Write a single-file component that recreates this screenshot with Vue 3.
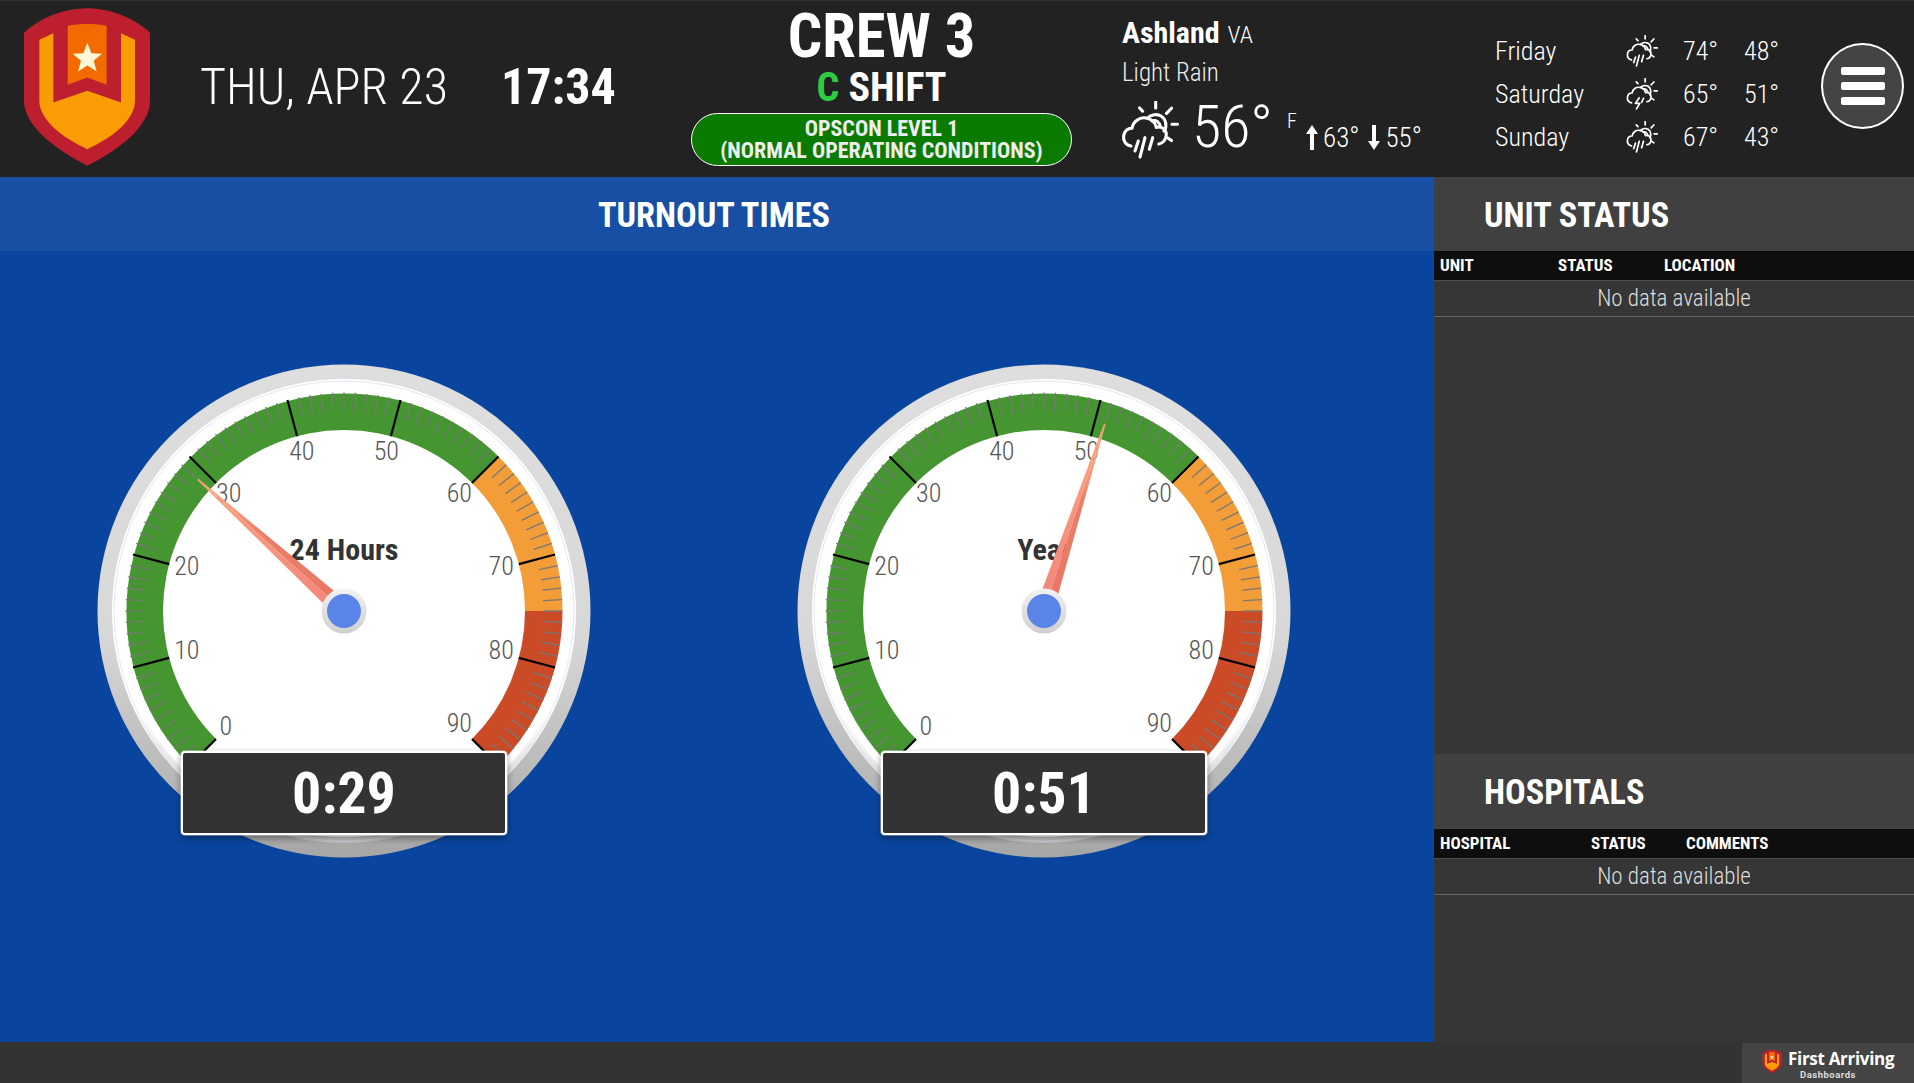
<script setup>
const deg = (v) => (v - 45) * 3
const polar = (r, a) => {
  const t = (a * Math.PI) / 180
  return { x: +(r * Math.sin(t)).toFixed(2), y: +(-r * Math.cos(t)).toFixed(2) }
}
const arc = (from, to, ro, ri) => {
  const a = polar(ro, deg(from)), b = polar(ro, deg(to)), c = polar(ri, deg(to)), d = polar(ri, deg(from))
  const large = deg(to) - deg(from) > 180 ? 1 : 0
  return `M${a.x} ${a.y}A${ro} ${ro} 0 ${large} 1 ${b.x} ${b.y}L${c.x} ${c.y}A${ri} ${ri} 0 ${large} 0 ${d.x} ${d.y}Z`
}
const bands = [
  { d: arc(0, 60, 218.5, 181), c: '#459630' },
  { d: arc(60, 75, 218.5, 181), c: '#f39d38' },
  { d: arc(75, 90, 218.5, 181), c: '#cb4b27' }
]
const minor = []
const major = []
for (let v = 0; v <= 90; v++) {
  if (v % 10 === 0) {
    major.push({ a: polar(218.5, deg(v)), b: polar(181, deg(v)) })
  } else {
    minor.push({ a: polar(218.5, deg(v)), b: polar(199.5, deg(v)) })
  }
}
const labels = [
  { v: 0, x: -118.3, y: 115.7 },
  { v: 10, x: -157.2, y: 39 },
  { v: 20, x: -157.2, y: -45 },
  { v: 30, x: -115.3, y: -117.7 },
  { v: 40, x: -42.2, y: -160 },
  { v: 50, x: 42.3, y: -160 },
  { v: 60, x: 115.3, y: -117.7 },
  { v: 70, x: 157.2, y: -45 },
  { v: 80, x: 157.2, y: 39 },
  { v: 90, x: 115.3, y: 112.3 }
]
const gauges = [
  { title: '24 Hours', val: 29, text: '0:29' },
  { title: 'Year', val: 51, text: '0:51' }
]
const forecast = [
  { day: 'Friday', icon: '#wx-rain', hi: '74°', lo: '48°' },
  { day: 'Saturday', icon: '#wx-bolt', hi: '65°', lo: '51°' },
  { day: 'Sunday', icon: '#wx-rain', hi: '67°', lo: '43°' }
]
</script>

<template>
  <div class="page">
    <svg class="defs" width="0" height="0" aria-hidden="true">
      <defs>
        <linearGradient id="rim" x1="0" y1="0" x2="0" y2="1">
          <stop offset="0" stop-color="#dedede" />
          <stop offset="0.55" stop-color="#d8d8d8" />
          <stop offset="1" stop-color="#a6a6a6" />
        </linearGradient>
        <linearGradient id="rim2" x1="0" y1="0" x2="0" y2="1">
          <stop offset="0" stop-color="#ffffff" />
          <stop offset="0.72" stop-color="#ffffff" />
          <stop offset="1" stop-color="#c4c4c4" />
        </linearGradient>
        <linearGradient id="hub" x1="0" y1="0" x2="0" y2="1">
          <stop offset="0" stop-color="#f2f2f2" />
          <stop offset="1" stop-color="#cfcfcf" />
        </linearGradient>
        <linearGradient id="nl" gradientUnits="userSpaceOnUse" x1="0" y1="-20" x2="0" y2="-197">
          <stop offset="0" stop-color="#f5877d" />
          <stop offset="1" stop-color="#fba57f" />
        </linearGradient>
        <linearGradient id="nr" gradientUnits="userSpaceOnUse" x1="0" y1="-20" x2="0" y2="-197">
          <stop offset="0" stop-color="#e87865" />
          <stop offset="0.55" stop-color="#ea7e69" />
          <stop offset="0.72" stop-color="#f99a7c" />
          <stop offset="1" stop-color="#fba57f" />
        </linearGradient>
        <symbol id="wx-base" viewBox="0 0 58 58">
          <g fill="none" stroke="#fff" stroke-width="3.1" stroke-linecap="round" stroke-linejoin="round">
            <path d="M34.7 1.2V7M45.5 12.4L50.5 7.2M51 23.3H56.5M46.8 37L50.5 39.6M18.6 7L21.6 10.2" />
            <path d="M26.5 17C30 13.4 36 12.6 40 15C45 18 46.5 25.5 43 30M31 20C35 18.5 38.5 21 39.5 26" />
            <path d="M10 45C5 44.5 2 40 2.6 35C3.2 30 7 27 11 27.2C12 20.5 18.5 15.8 25 17C30.5 18 34.5 21.8 35.3 26.5C40.5 24.8 45.3 28.3 45.3 33.5C45.3 38.5 42 42.4 37.8 43" />
          </g>
        </symbol>
        <symbol id="wx-rain" viewBox="0 0 58 58">
          <use href="#wx-base" width="58" height="58" />
          <path d="M24 36.7L19 56M17.3 40L14 50M31.7 36.7L28.3 48.3" fill="none" stroke="#fff" stroke-width="3.1" stroke-linecap="round" />
        </symbol>
        <symbol id="wx-bolt" viewBox="0 0 58 58">
          <use href="#wx-base" width="58" height="58" />
          <path d="M24 36L17 46H25L19 56M31.7 36.7L28.3 44" fill="none" stroke="#fff" stroke-width="3.1" stroke-linecap="round" stroke-linejoin="round" />
        </symbol>
        <symbol id="shield" viewBox="60 10 402 497">
          <path d="M261 22C330 22 400 50 450 95V300C450 380 350 450 262 495C175 450 72 380 72 300V95C122 50 190 22 261 22Z" fill="#bd1f2e" />
          <path d="M118 117L160 97V305L262 270L363 305V97L405 117V300C405 360 330 415 262 445C195 415 118 360 118 300Z" fill="#f99c05" />
          <path d="M203 75C240 68 285 68 320 75V252L262 230L203 252Z" fill="#f26b00" />
          <path d="M262 126L274 157L306 159L281 180L290 212L262 194L234 212L243 180L218 159L250 157Z" fill="#fff8d8" />
        </symbol>
      </defs>
    </svg>

    <header class="header">
      <div class="logo-cell">
        <svg class="logo" width="134" height="166"><use href="#shield" width="134" height="166" /></svg>
      </div>
      <div class="date">THU, APR 23</div>
      <div class="time">17:34</div>
      <div class="crew">
        <div class="crew-name">CREW 3</div>
        <div class="shift"><span class="shift-c">C</span> SHIFT</div>
        <div class="opscon">OPSCON LEVEL 1<br />(NORMAL OPERATING CONDITIONS)</div>
      </div>
      <div class="weather">
        <div class="city"><b>Ashland</b> <span class="state">VA</span></div>
        <div class="cond">Light Rain</div>
        <div class="now">
          <svg class="now-icon" width="58" height="58"><use href="#wx-rain" width="58" height="58" /></svg>
          <span class="now-temp">56°</span>
          <span class="unit">F</span>
          <svg class="arrow" width="12" height="25" viewBox="0 0 12 25"><path d="M6 0L12 9H8V25H4V9H0Z" fill="#fff" /></svg>
          <span class="hl">63°</span>
          <svg class="arrow arrow-down" width="12" height="25" viewBox="0 0 12 25"><path d="M6 25L12 16H8V0H4V16H0Z" fill="#fff" /></svg>
          <span class="hl">55°</span>
        </div>
      </div>
      <div class="forecast">
        <template v-for="f in forecast" :key="f.day">
          <span class="fc-day">{{ f.day }}</span>
          <svg class="fc-icon" width="32" height="32"><use :href="f.icon" width="32" height="32" /></svg>
          <span class="fc-temp">{{ f.hi }}</span>
          <span class="fc-temp">{{ f.lo }}</span>
        </template>
      </div>
      <div class="menu"><i></i><i></i><i></i></div>
    </header>

    <div class="content">
      <main class="turnout">
        <h1 class="band">TURNOUT TIMES</h1>
        <div class="gauges">
          <div v-for="g in gauges" :key="g.title" class="gauge">
            <svg width="500" height="500" viewBox="-250 -250 500 500">
              <circle r="246.5" fill="url(#rim)" />
              <circle r="232" fill="url(#rim2)" />
              <circle r="230" fill="none" stroke="#cbd6ee" stroke-width="0.6" />
              <circle r="226" fill="#fff" />
              <path v-for="b in bands" :key="b.c" :d="b.d" :fill="b.c" />
              <line v-for="(t, i) in minor" :key="i" :x1="t.a.x" :y1="t.a.y" :x2="t.b.x" :y2="t.b.y" stroke="#787878" stroke-width="1.3" />
              <line v-for="(t, i) in major" :key="i" :x1="t.a.x" :y1="t.a.y" :x2="t.b.x" :y2="t.b.y" stroke="#000" stroke-width="2.2" />
              <text v-for="l in labels" :key="l.v" :x="l.x" :y="l.y + 8.5" class="tick-label" text-anchor="middle">{{ l.v }}</text>
              <text x="0" y="-51" class="gauge-title" text-anchor="middle">{{ g.title }}</text>
              <g :transform="`rotate(${deg(g.val)})`">
                <path d="M-8.5 -16L-0.8 -197H0V-16Z" fill="url(#nl)" />
                <path d="M8.5 -16L0.8 -197H0V-16Z" fill="url(#nr)" />
              </g>
              <circle r="22.6" fill="url(#hub)" />
              <circle r="17" fill="#5a84e8" />
            </svg>
            <div class="readout">{{ g.text }}</div>
          </div>
        </div>
      </main>
      <aside class="side">
        <section class="panel panel-units">
          <h2 class="panel-title">UNIT STATUS</h2>
          <div class="thead thead-units"><span>UNIT</span><span>STATUS</span><span>LOCATION</span></div>
          <div class="empty">No data available</div>
        </section>
        <section class="panel">
          <h2 class="panel-title panel-title-hosp">HOSPITALS</h2>
          <div class="thead thead-hosp"><span>HOSPITAL</span><span>STATUS</span><span>COMMENTS</span></div>
          <div class="empty">No data available</div>
        </section>
      </aside>
    </div>

    <footer class="footer">
      <div class="brand">
        <svg width="20" height="25"><use href="#shield" width="20" height="25" /></svg>
        <div class="brand-text">
          <div class="brand-name">First Arriving</div>
          <div class="brand-sub">Dashboards</div>
        </div>
      </div>
    </footer>
  </div>
</template>

<style>
html, body { margin: 0; background: #333; }
</style>

<style scoped>
.page {
  width: 1914px;
  height: 1083px;
  display: flex;
  flex-direction: column;
  overflow: hidden;
  position: relative;
  font-family: Roboto, "Liberation Sans", sans-serif;
  font-stretch: 75%;
  color: #fff;
}
.defs { position: absolute; }
.header {
  height: 177px;
  flex: none;
  box-sizing: border-box;
  background: #222;
  border-top: 1px solid #333;
  display: flex;
  align-items: flex-start;
}
.logo-cell { width: 200px; padding: 3px 0 0 20px; box-sizing: border-box; }
.logo { display: block; }
.date { width: 301px; font-size: 50px; font-weight: 300; line-height: 60px; margin-top: 56px; }
.time { width: 190px; font-size: 50px; font-weight: 700; line-height: 60px; margin-top: 56px; }
.crew { width: 381px; text-align: center; }
.crew-name { font-size: 60.5px; font-weight: 700; line-height: 58px; margin-top: 7px; }
.shift { font-size: 40px; font-weight: 700; line-height: 42px; padding-top: 1px; }
.shift-c { color: #2ecc40; }
.opscon {
  margin-top: 4px;
  height: 53px;
  box-sizing: border-box;
  border: 1.5px solid #fff;
  border-radius: 27px;
  background: #0a7b00;
  font-size: 22px;
  font-weight: 700;
  line-height: 22px;
  padding-top: 4px;
  color: #eee;
  white-space: nowrap;
}
.weather { width: 323px; margin-left: 50px; margin-right: 50px; padding-top: 13px; }
.city { font-size: 30px; line-height: 38px; }
.city b { font-weight: 700; }
.state { font-size: 24px; font-weight: 300; margin-left: 1px; }
.cond { font-size: 25px; font-weight: 300; line-height: 38px; color: #eee; }
.now { display: flex; align-items: flex-start; margin: 9px 0 0 -1px; }
.now-icon { flex: none; }
.now-temp { font-size: 60px; font-weight: 300; line-height: 60px; margin: -4px 0 0 13px; width: 95px; }
.unit { font-size: 20px; font-weight: 300; line-height: 24px; margin-top: 8px; width: 19px; }
.arrow { flex: none; margin-top: 24px; }
.arrow-down { margin-left: 9px; }
.hl { font-size: 27px; font-weight: 300; line-height: 30px; margin: 22px 0 0 5px; }
.forecast {
  width: 326px;
  margin-top: 29px;
  display: grid;
  grid-template-columns: 131px 57px 61px 1fr;
  grid-auto-rows: 42.7px;
  align-items: center;
  font-size: 26px;
  font-weight: 300;
}
.fc-icon { display: block; }
.menu {
  width: 83px;
  height: 86px;
  margin-top: 42px;
  box-sizing: border-box;
  border: 2px solid #fff;
  border-radius: 50%;
  background: #444;
  display: flex;
  flex-direction: column;
  align-items: center;
  justify-content: center;
  gap: 7px;
}
.menu i { display: block; width: 44px; height: 8px; border-radius: 2px; background: #fff; }
.content { flex: 1; display: flex; min-height: 0; }
.turnout { width: 1434px; background: #09459e; display: flex; flex-direction: column; }
.band {
  margin: 0;
  height: 74px;
  flex: none;
  background: #164fa3;
  text-align: center;
  font-size: 34.3px;
  font-weight: 700;
  line-height: 76px;
  padding-right: 6px;
}
.gauges { display: flex; gap: 200px; padding: 110px 0 0 94px; }
.gauge { position: relative; width: 500px; height: 500px; }
.gauge svg { display: block; }
.tick-label { font-size: 26px; font-weight: 300; fill: #555; }
.gauge-title { font-size: 30px; font-weight: 700; fill: #333; }
.readout {
  position: absolute;
  left: 87px;
  top: 390px;
  width: 326px;
  height: 84px;
  box-sizing: border-box;
  border: 2px solid #fff;
  border-radius: 4px;
  background: #333;
  box-shadow: 0 0 0 1px rgba(255, 255, 255, 0.35), 0 3px 7px rgba(0, 0, 0, 0.45);
  text-align: center;
  font-size: 58px;
  font-weight: 700;
  line-height: 80px;
}
.side { width: 480px; background: #363636; display: flex; flex-direction: column; }
.panel-units { height: 577px; flex: none; }
.panel-title {
  margin: 0;
  height: 74px;
  background: #404040;
  font-size: 34.3px;
  font-weight: 700;
  line-height: 76px;
  padding-left: 50px;
}
.panel-title-hosp { height: 75px; }
.thead {
  height: 29px;
  box-sizing: border-box;
  padding: 0 0 2px 6px;
  background: #0e0e0e;
  display: grid;
  align-items: center;
  font-size: 17px;
  font-weight: 700;
}
.thead-units { grid-template-columns: 118px 106px 1fr; }
.thead-hosp { grid-template-columns: 151px 95px 1fr; }
.empty {
  height: 37px;
  border-top: 1px solid #4c4c4c;
  border-bottom: 1px solid #666;
  box-sizing: border-box;
  text-align: center;
  font-size: 23px;
  font-weight: 300;
  line-height: 35px;
  color: #ddd;
}
.footer { height: 41px; flex: none; background: #333; display: flex; justify-content: flex-end; }
.brand {
  width: 172px;
  box-sizing: border-box;
  padding: 6px 0 0 20px;
  margin-top: 1px;
  background: #444;
  display: flex;
  gap: 6px;
}
.brand-text { display: flex; flex-direction: column; align-items: flex-start; }
.brand-name { font-size: 17px; font-weight: 700; line-height: 20px; font-stretch: 100%; font-family: "Open Sans", sans-serif; letter-spacing: -0.3px; }
.brand-sub { font-size: 9.5px; font-weight: 700; line-height: 11px; margin-left: 12px; font-family: Roboto, sans-serif; font-stretch: 100%; letter-spacing: 0.5px; color: #ddd; }
</style>
